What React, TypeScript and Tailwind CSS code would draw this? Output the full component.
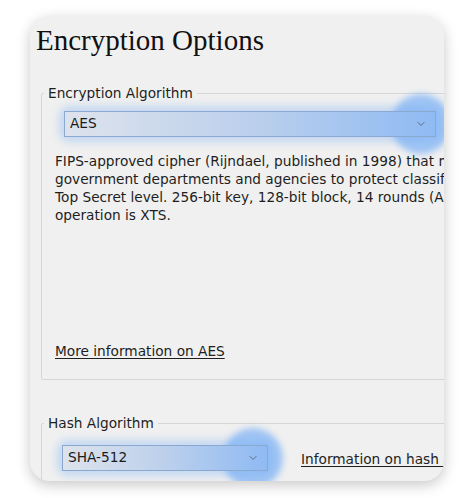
import { ChevronDown } from "lucide-react";

const ui = { fontFamily: '"DejaVu Sans", "Noto Sans", sans-serif' };

function Select({ value, width }: { value: string; width: string }) {
  return (
    <div className={`relative ${width}`}>
      <div className="absolute -inset-[5px] rounded-[10px] bg-[#7fb2f5]/40 blur-[4px]" />
      <div className="absolute -right-[15px] top-1/2 h-[60px] w-[60px] -translate-y-1/2 rounded-full bg-[#6aa8f7]/60 blur-[3px]" />
      <div className="relative flex h-[26px] items-center justify-between border border-[#8ba8cf] bg-gradient-to-r from-[#dde3ec] via-[#bcd0ec] to-[#8fbaf3] pl-[5px] pr-[8px] text-[13.7px] text-[#1b1b1b]">
        <span>{value}</span>
        <ChevronDown className="h-[12px] w-[12px] text-[#5a6b82]" strokeWidth={2} />
      </div>
    </div>
  );
}

export default function App() {
  return (
    <div className="min-h-[498px] bg-white pl-[30px] pt-[16px]">
      <div
        className="h-[465px] w-[414px] overflow-hidden rounded-[20px] bg-[#f0f0f0] shadow-[0_4px_14px_rgba(0,0,0,0.22)]"
        style={ui}
      >
        <div className="w-[520px]">
          <h1
            className="pl-[6px] pt-[7px] text-[29px] leading-[34px] text-[#111]"
            style={{ fontFamily: '"Liberation Serif", serif' }}
          >
            Encryption Options
          </h1>

          <fieldset className="ml-[11px] mt-[26px] h-[297px] rounded-[2px] border border-[#d6d6d6]">
            <legend className="ml-[2px] px-[4px] text-[13.7px] text-[#1e1e1e]">
              Encryption Algorithm
            </legend>
            <div className="pl-[13px]">
              <div className="ml-[9px] mt-[7px]">
                <Select value="AES" width="w-[372px]" />
              </div>
              <p className="mt-[15px] whitespace-nowrap text-[13.7px] leading-[18px] text-[#1e1e1e]">
                FIPS-approved cipher (Rijndael, published in 1998) that may be used by U.S.
                <br />
                government departments and agencies to protect classified information up to the
                <br />
                Top Secret level. 256-bit key, 128-bit block, 14 rounds (AES-256). Mode of
                <br />
                operation is XTS.
              </p>
              <a className="mt-[117px] block text-[13.7px] text-[#1e1e1e] underline underline-offset-2">
                More information on AES
              </a>
            </div>
          </fieldset>

          <fieldset className="ml-[11px] mt-[33px] h-[80px] rounded-[2px] border border-[#d6d6d6]">
            <legend className="ml-[2px] px-[4px] text-[13.7px] text-[#1e1e1e]">
              Hash Algorithm
            </legend>
            <div className="mt-[11px] flex items-center pl-[20px]">
              <Select value="SHA-512" width="w-[206px]" />
              <a className="ml-[33px] mt-[4px] whitespace-nowrap text-[13.7px] text-[#1e1e1e] underline underline-offset-2">
                Information on hash algorithms
              </a>
            </div>
          </fieldset>
        </div>
      </div>
    </div>
  );
}
